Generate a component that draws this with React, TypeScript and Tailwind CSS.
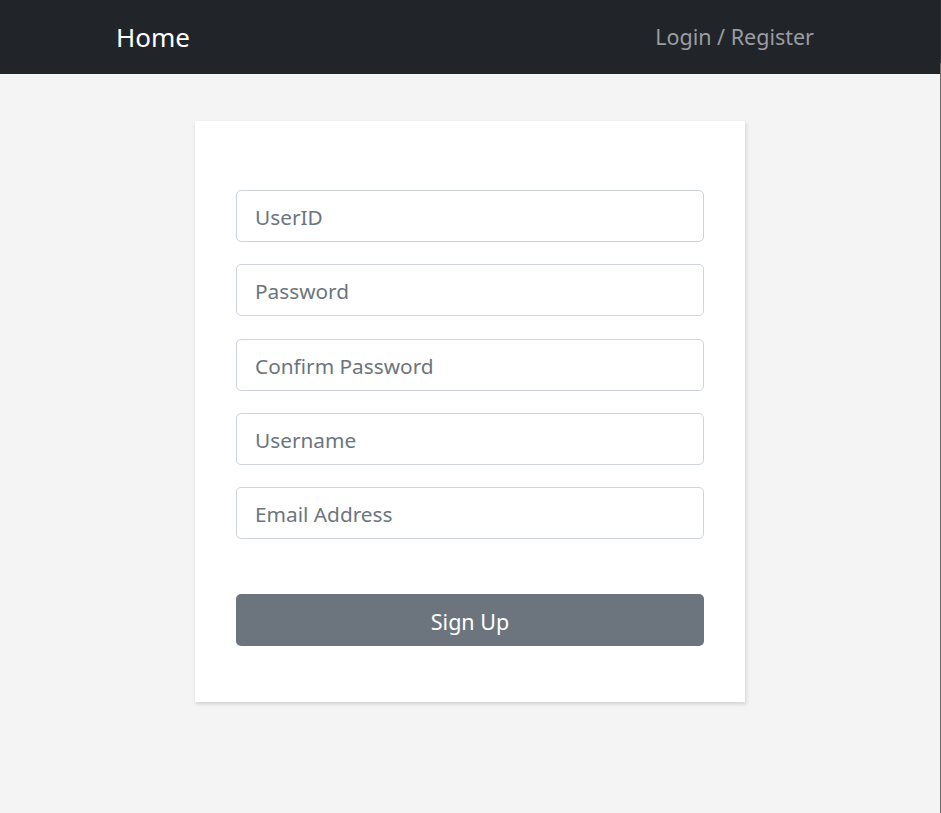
import React from "react";

const fields = ["UserID", "Password", "Confirm Password", "Username", "Email Address"];

export default function App() {
  return (
    <div
      className="flex min-h-[813px] w-full bg-white"
      style={{ fontFamily: '"Noto Sans", "Noto Sans CJK KR", sans-serif' }}
    >
      <div className="w-[940px] shrink-0 bg-[#f4f4f4]">
        <nav className="h-[74px] bg-[#212529] flex items-center justify-between pl-[116px] pr-[126px]">
          <a className="text-white text-[26px] leading-none">Home</a>
          <a className="text-[#9a9da0] text-[21.5px] leading-none">Login / Register</a>
        </nav>
        <div className="flex justify-center pt-[47px]">
          <div className="w-[550px] bg-white shadow-[1px_2px_4px_rgba(0,0,0,0.15)] px-[41px] pt-[69px] pb-[56px]">
            <form className="flex flex-col gap-[22.25px]">
              {fields.map((f) => (
                <input
                  key={f}
                  placeholder={f}
                  type="text"
                  className="h-[52px] w-full rounded-[5px] border border-[#ced4da] bg-white px-[18px] pt-[2px] text-[20.8px] text-[#495057] placeholder:text-[#6c757d] outline-none"
                />
              ))}
              <button
                type="button"
                className="mt-[33px] h-[52px] w-full rounded-[5px] bg-[#6c757d] pt-[3px] text-white text-[21.5px]"
              >
                Sign Up
              </button>
            </form>
          </div>
        </div>
      </div>
      <div className="flex w-[1px] flex-col">
        <div className="h-[63px] bg-[#2a2d31]" />
        <div className="flex-1 bg-[#6a6a6a]" />
      </div>
    </div>
  );
}
